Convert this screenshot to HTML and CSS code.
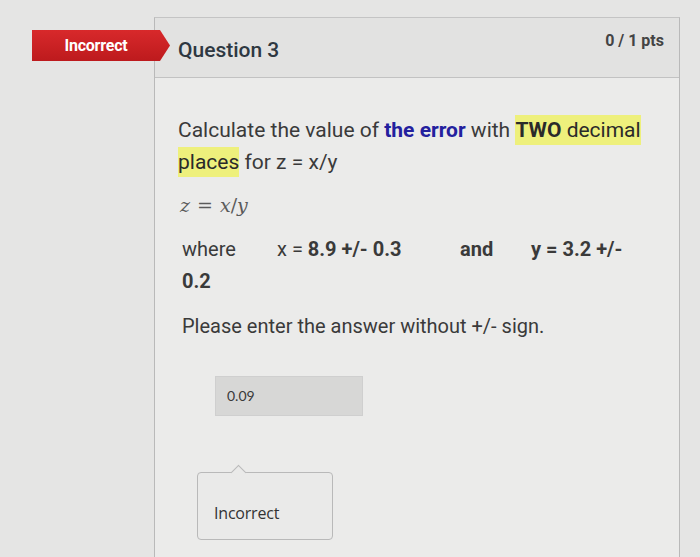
FILE: index.html
```html
<!DOCTYPE html>
<html lang="en">
<head>
<meta charset="utf-8">
<title>Question 3</title>
<link rel="stylesheet" href="styles.css">
</head>
<body>
<div class="page">
  <div class="badge">Incorrect</div>
  <div class="card">
    <div class="card-header">
      <h2 class="title">Question 3</h2>
      <span class="pts">0 / 1 pts</span>
    </div>
    <div class="card-body">
      <p class="prompt">Calculate the value of <strong class="blue">the error</strong> with <mark class="hl"><strong>TWO</strong> decimal</mark><br><mark class="hl">places</mark> for z = x/y</p>
      <p class="math"><i>z</i><span class="eq">=</span><i>x</i>/<i>y</i></p>
      <p class="where"><span class="c1">where</span><span class="c2">x = <b>8.9 +/- 0.3</b></span><span class="c3"><b>and</b></span><span class="c4"><b>y = 3.2 +/-</b></span><br><b>0.2</b></p>
      <p class="note">Please enter the answer without +/- sign.</p>
      <div class="answer">0.09</div>
      <div class="feedback">
        <span class="feedback-text">Incorrect</span>
      </div>
    </div>
  </div>
</div>
</body>
</html>
```

FILE: styles.css
```css
html, body {
  margin: 0;
  padding: 0;
  background: #e5e5e4;
}
body {
  font-family: Roboto, "Noto Sans", Arial, sans-serif;
  color: #3b3b3b;
  width: 700px;
  height: 557px;
  overflow: hidden;
}
.page {
  position: relative;
  padding: 17px 0 0 154px;
  height: 540px;
}
.badge {
  position: absolute;
  left: 32px;
  top: 30px;
  width: 138px;
  height: 31px;
  box-sizing: border-box;
  padding-right: 10px;
  background: linear-gradient(#d8292b, #bd1a1d);
  clip-path: polygon(0 0, 128px 0, 138px 50%, 128px 100%, 0 100%);
  color: #fff;
  font-weight: 700;
  font-size: 16px;
  line-height: 31px;
  text-align: center;
  letter-spacing: -0.2px;
  z-index: 2;
}
.card {
  width: 526px;
  height: 540px;
  box-sizing: border-box;
  border-left: 1px solid #b9b9b9;
  border-right: 1px solid #b9b9b9;
  border-top: 1px solid #c4c4c4;
  background: #ebebea;
}
.card-header {
  height: 59px;
  border-bottom: 1px solid #c2c2c2;
  background: #e2e2e1;
  display: flex;
  justify-content: space-between;
  align-items: flex-start;
  padding: 0 15px 0 23px;
}
.title {
  margin: 20px 0 0;
  font-size: 21px;
  font-weight: 500;
  color: #2e3841;
  line-height: 24px;
}
.pts {
  margin-top: 13px;
  font-size: 16px;
  font-weight: 700;
  color: #444;
  line-height: 20px;
}
.card-body {
  padding: 36px 0 0 23px;
}
.prompt {
  margin: 0;
  font-size: 21px;
  line-height: 32px;
  color: #3a3a3a;
}
.blue {
  color: #23209e;
  font-weight: 700;
}
.hl {
  background: #eef07c;
  color: #2a2a2a;
  padding: 3px 0;
}
.hl strong {
  font-weight: 700;
}
.math {
  margin: 11px 0 0 2px;
  font-family: "DejaVu Serif", "Liberation Serif", serif;
  font-size: 19px;
  line-height: 32px;
  color: #5a5a5a;
}
.math i {
  font-style: italic;
}
.eq {
  margin: 0 7px;
}
.where {
  margin: 12px 0 0 4px;
  font-size: 20px;
  line-height: 32px;
  color: #3a3a3a;
}
.where b {
  font-weight: 700;
}
.c1, .c2, .c3, .c4 {
  display: inline-block;
}
.c1 { width: 95px; }
.c2 { width: 183px; }
.c3 { width: 71px; }
.note {
  margin: 13px 0 0 4px;
  font-size: 20px;
  line-height: 32px;
  color: #3a3a3a;
}
.answer {
  margin: 34px 0 0 37px;
  width: 148px;
  height: 40px;
  box-sizing: border-box;
  padding-left: 11px;
  background: #d7d7d6;
  border: 1px solid #cfcfcf;
  font-family: Lato, "Open Sans", sans-serif;
  font-size: 14px;
  line-height: 37px;
  color: #3a3a3a;
}
.feedback {
  position: relative;
  margin: 56px 0 0 19px;
  width: 136px;
  height: 68px;
  box-sizing: border-box;
  border: 1px solid #b9b9b9;
  border-radius: 4px;
  background: #eaeae9;
  padding: 29px 0 0 16px;
}
.feedback::before {
  content: "";
  position: absolute;
  left: 35px;
  top: -6px;
  width: 10px;
  height: 10px;
  background: #eaeae9;
  border-left: 1px solid #b9b9b9;
  border-top: 1px solid #b9b9b9;
  transform: rotate(45deg);
}
.feedback-text {
  font-family: "Open Sans", Lato, sans-serif;
  font-size: 16px;
  line-height: 22px;
  color: #333;
  letter-spacing: -0.2px;
}
```
